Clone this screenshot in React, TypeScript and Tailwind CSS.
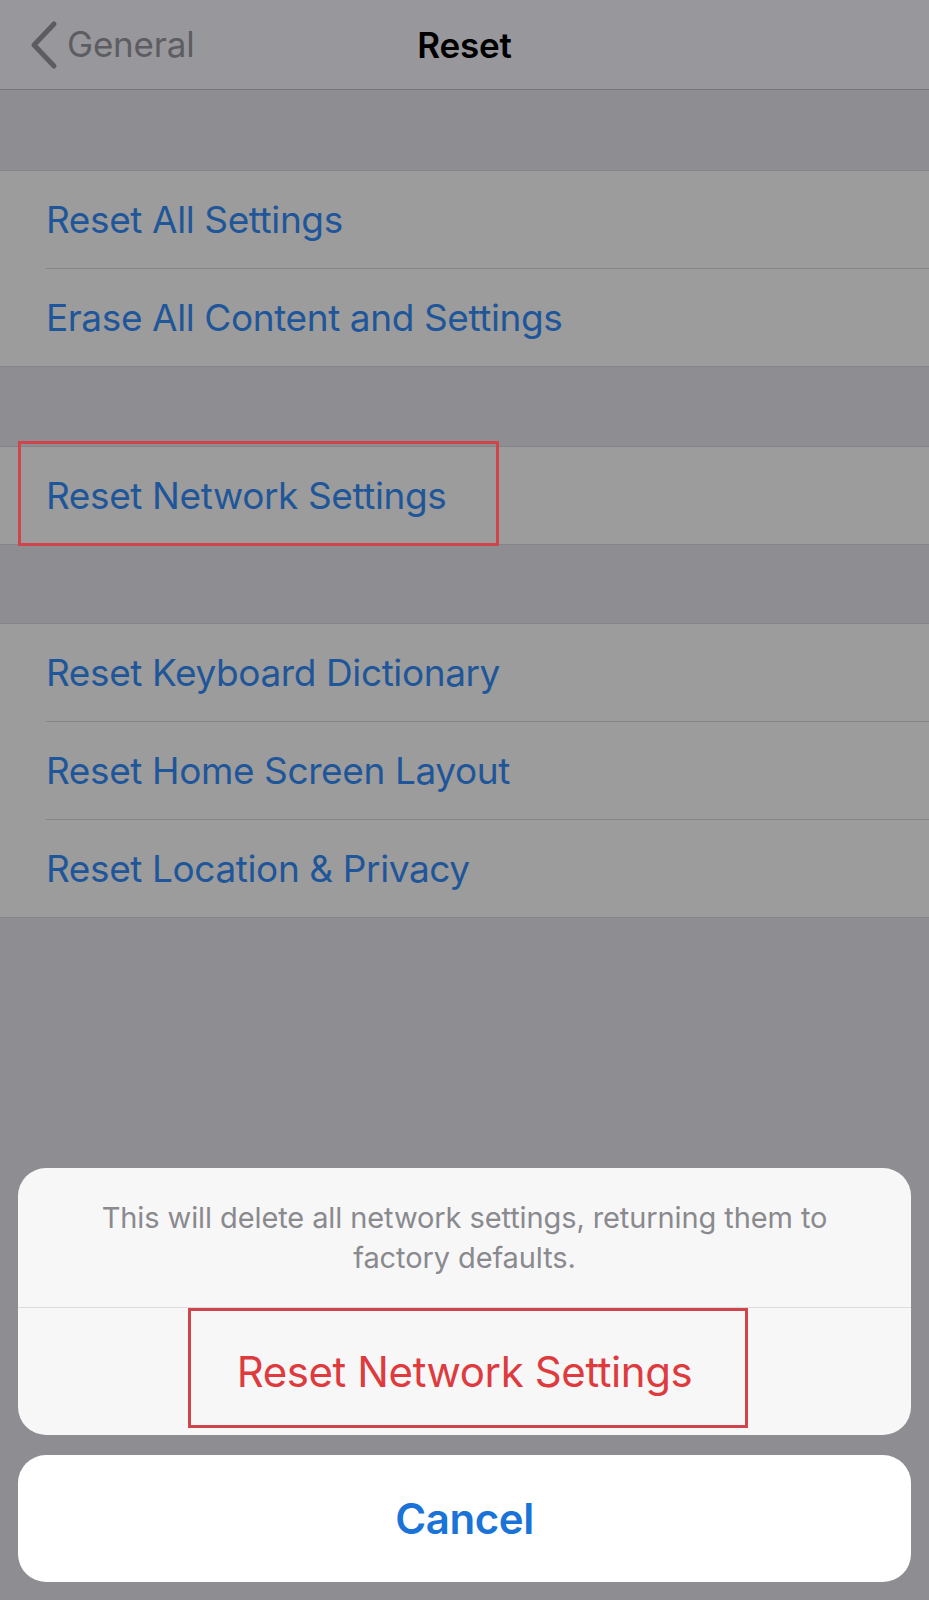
import React from 'react';

const font = { fontFamily: 'Inter, "Noto Sans", sans-serif' };

const Row = ({ label, last }: { label: string; last?: boolean }) => (
  <div className="flex flex-col bg-[#9c9c9c]">
    <div className="flex h-[97px] items-center pl-[46px] text-[37px] tracking-[-0.4px] text-[#1f5699]">
      {label}
    </div>
    {!last && <div className="ml-[46px] h-px bg-[#858585]" />}
  </div>
);

const Group = ({ items }: { items: string[] }) => (
  <div className="flex flex-col border-y border-[#858488]">
    {items.map((item, i) => (
      <Row key={item} label={item} last={i === items.length - 1} />
    ))}
  </div>
);

export default function App() {
  return (
    <div className="relative h-[1600px] w-full overflow-hidden bg-[#8e8d92]" style={font}>
      <div className="flex h-[90px] items-center border-b border-[#77767a] bg-[#98979c] relative">
        <div className="flex items-center pl-[26px]">
          <svg width="34" height="50" viewBox="0 0 34 50" fill="none">
            <path d="M28 4 L8 25 L28 46" stroke="#5d5d61" strokeWidth="5" strokeLinecap="round" strokeLinejoin="round" />
          </svg>
          <span className="ml-[7px] text-[35px] tracking-[-0.2px] text-[#5d5d61]">General</span>
        </div>
        <div className="absolute inset-x-0 top-0 flex h-[90px] items-center justify-center pointer-events-none">
          <span className="text-[35px] font-semibold tracking-[-0.2px] text-black">Reset</span>
        </div>
      </div>

      <div className="h-[80px]" />
      <Group items={['Reset All Settings', 'Erase All Content and Settings']} />
      <div className="h-[79px]" />
      <Group items={['Reset Network Settings']} />
      <div className="h-[78px]" />
      <Group items={['Reset Keyboard Dictionary', 'Reset Home Screen Layout', 'Reset Location & Privacy']} />

      {/* highlight around list row */}
      <div className="absolute left-[18px] top-[441px] h-[105px] w-[481px] border-[3px] border-[#d0454c]" />

      {/* action sheet */}
      <div className="absolute inset-x-[18px] bottom-[18px] flex flex-col gap-[20px]">
        <div className="flex flex-col overflow-hidden rounded-[28px] bg-[#f7f7f8]">
          <div className="flex h-[139px] items-center justify-center px-[78px] text-center text-[29px] leading-[40px] tracking-[-0.1px] text-[#8a8a8e]">
            This will delete all network settings, returning them to factory defaults.
          </div>
          <div className="h-px bg-[#dcdcde]" />
          <div className="relative flex h-[127px] items-center justify-center text-[42px] tracking-[-0.4px] text-[#de3b3f]">
            Reset Network Settings
            <div className="absolute left-[170px] top-0 h-[120px] w-[560px] border-[3px] border-[#d0454c]" />
          </div>
        </div>
        <div className="flex h-[127px] items-center justify-center rounded-[28px] bg-white text-[42px] font-semibold tracking-[-0.4px] text-[#1a73d6]">
          Cancel
        </div>
      </div>
    </div>
  );
}
